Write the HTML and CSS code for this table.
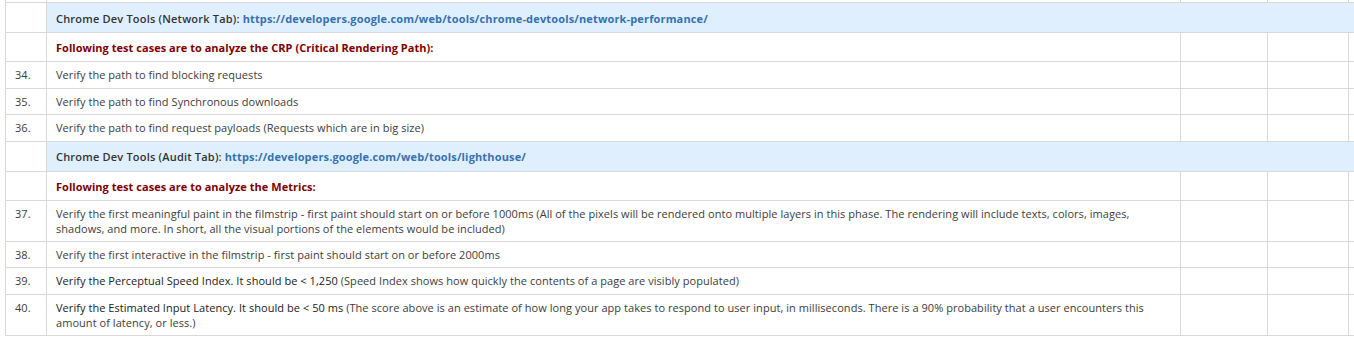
FILE: index.html
```html
<!DOCTYPE html>
<html lang="en">
<head>
    <meta charset="UTF-8">
    <title>Performance Test Cases</title>
    <link rel="stylesheet" href="styles.css">
</head>
<body>
    <!-- Test case table (scrolled, top row clipped) -->
    <table class="cases">
        <tr class="row-cut">
            <td class="c-num"></td>
            <td class="c-text"></td>
            <td class="c-a"></td>
            <td class="c-b"></td>
            <td class="c-c"></td>
        </tr>
        <tr class="row-head">
            <td class="num"></td>
            <td colspan="4" class="head-cell">
                <strong>Chrome Dev Tools (Network Tab):</strong>
                <a href="#">https://developers.google.com/web/tools/chrome-devtools/network-performance/</a>
            </td>
        </tr>
        <tr class="row-note">
            <td class="num"></td>
            <td class="note">Following test cases are to analyze the CRP (Critical Rendering Path):</td>
            <td></td><td></td><td></td>
        </tr>
        <tr class="row-item">
            <td class="num">34.</td>
            <td>Verify the path to find blocking requests</td>
            <td></td><td></td><td></td>
        </tr>
        <tr class="row-item">
            <td class="num">35.</td>
            <td>Verify the path to find Synchronous downloads</td>
            <td></td><td></td><td></td>
        </tr>
        <tr class="row-item">
            <td class="num">36.</td>
            <td>Verify the path to find request payloads (Requests which are in big size)</td>
            <td></td><td></td><td></td>
        </tr>
        <tr class="row-head">
            <td class="num"></td>
            <td colspan="4" class="head-cell">
                <strong>Chrome Dev Tools (Audit Tab):</strong>
                <a href="#">https://developers.google.com/web/tools/lighthouse/</a>
            </td>
        </tr>
        <tr class="row-note">
            <td class="num"></td>
            <td class="note">Following test cases are to analyze the Metrics:</td>
            <td></td><td></td><td></td>
        </tr>
        <tr class="row-item">
            <td class="num">37.</td>
            <td>Verify the first meaningful paint in the filmstrip - first paint should start on or before 1000ms (All of the pixels will be rendered onto multiple layers in this phase. The rendering will include texts, colors, images, shadows, and more. In short, all the visual portions of the elements would be included)</td>
            <td></td><td></td><td></td>
        </tr>
        <tr class="row-item">
            <td class="num">38.</td>
            <td>Verify the first interactive in the filmstrip - first paint should start on or before 2000ms</td>
            <td></td><td></td><td></td>
        </tr>
        <tr class="row-item">
            <td class="num">39.</td>
            <td><span class="key">Verify the Perceptual Speed Index. It should be &lt; 1,250</span> (Speed Index shows how quickly the contents of a page are visibly populated)</td>
            <td></td><td></td><td></td>
        </tr>
        <tr class="row-item">
            <td class="num">40.</td>
            <td><span class="key">Verify the Estimated Input Latency. It should be &lt; 50 ms</span> (The score above is an estimate of how long your app takes to respond to user input, in milliseconds. There is a 90% probability that a user encounters this amount of latency, or less.)</td>
            <td></td><td></td><td></td>
        </tr>
    </table>
</body>
</html>
```

FILE: styles.css
```css
/* ====== Base ====== */
body {
    margin: 0;
    background: #fff;
    overflow: hidden;
    font-family: 'Open Sans', 'Noto Sans', sans-serif;
    font-size: 11px;
    letter-spacing: 0.05px;
    color: #3d3d3d;
}

/* ====== Table ====== */
.cases {
    margin-left: 5px;
    width: 1404px;
    table-layout: fixed;
    border-collapse: separate;
    border-spacing: 0;
}
.cases td {
    box-sizing: border-box;
    border-right: 1px solid #d9d9d9;
    border-bottom: 1px solid #d9d9d9;
    padding: 5px 9px;
    line-height: 15px;
    vertical-align: top;
    text-align: left;
}
.cases td:first-child {
    border-left: 1px solid #d9d9d9;
}

/* column widths, set on the clipped first row */
.row-cut td {
    height: 3px;
    padding: 0;
    line-height: 0;
}
.c-num { width: 42px; }
.c-text { width: 1134px; }
.c-a { width: 87px; }
.c-b { width: 81px; }
.c-c { width: 60px; }

/* ====== Section header ====== */
.row-head td {
    height: 30px;
    padding-top: 7px;
    padding-bottom: 6px;
    vertical-align: middle;
}
.head-cell {
    background: #e0effe;
    color: #333;
}
.head-cell strong {
    font-weight: 600;
    letter-spacing: 0.2px;
}
.head-cell a {
    color: #3572b0;
    font-weight: 700;
    letter-spacing: 0.15px;
    text-decoration: none;
}

/* ====== Red note rows ====== */
.row-note td {
    height: 29px;
    padding-top: 7px;
    padding-bottom: 6px;
    vertical-align: middle;
}
.note {
    color: #800000;
    font-weight: 700;
    letter-spacing: 0.03px;
}

/* ====== Item rows ====== */
.row-item td {
    height: 26.5px;
}
.key {
    color: #222;
}
```
